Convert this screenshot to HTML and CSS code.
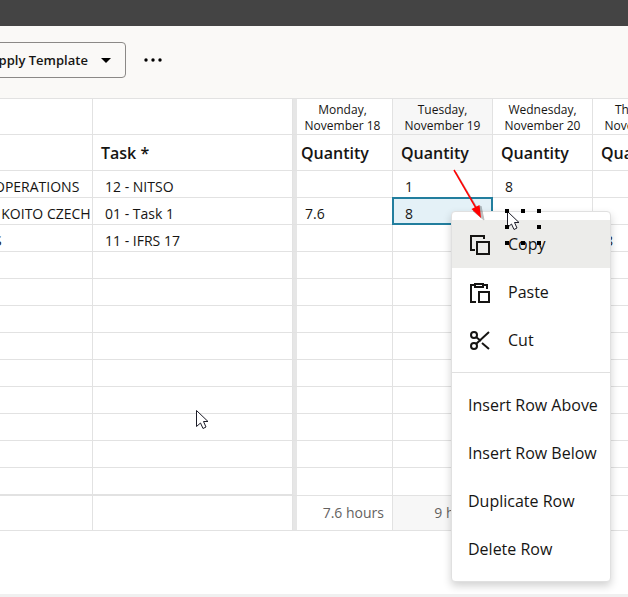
FILE: index.html
```
<!DOCTYPE html>
<html lang="en">
<head>
  <meta charset="UTF-8">
  <meta name="viewport" content="width=device-width, initial-scale=1.0">
  <title>Time Card</title>
  <link rel="stylesheet" href="styles.css">
</head>
<body>

<header class="topbar"></header>

<div class="toolbar">
  <button class="template-button" type="button">
    Apply Template
    <svg class="caret" viewBox="0 0 10 5" aria-hidden="true"><path d="M0 0h10L5 5z"/></svg>
  </button>
  <button class="more-button" type="button" aria-label="More actions">
    <svg viewBox="0 0 18 4" aria-hidden="true">
      <circle cx="2" cy="2" r="1.700"/><circle cx="9" cy="2" r="1.700"/><circle cx="16" cy="2" r="1.700"/>
    </svg>
  </button>
</div>

<main class="grid-area">
  <table class="timecard">
    <colgroup>
      <col class="col-project">
      <col class="col-task">
      <col class="col-day" span="4">
    </colgroup>
    <thead>
      <tr class="dates">
        <th></th>
        <th></th>
        <th class="split">Monday,<br>November 18</th>
        <th class="today">Tuesday,<br>November 19</th>
        <th>Wednesday,<br>November 20</th>
        <th>Thursday,<br>November 21</th>
      </tr>
      <tr class="names">
        <th></th>
        <th>Task *</th>
        <th class="split">Quantity</th>
        <th class="today">Quantity</th>
        <th>Quantity</th>
        <th>Quantity</th>
      </tr>
    </thead>
    <tbody>
      <tr><td class="project">OPERATIONS</td><td>12 - NITSO</td><td class="split"></td><td>1</td><td>8</td><td></td></tr>
      <tr><td class="project">&nbsp; KOITO CZECH</td><td>01 - Task 1</td><td class="split">7.6</td><td class="selected">8</td><td></td><td></td></tr>
      <tr><td class="project">S</td><td>11 - IFRS 17</td><td class="split"></td><td></td><td></td><td>8</td></tr>
      <tr><td></td><td></td><td class="split"></td><td></td><td></td><td></td></tr>
      <tr><td></td><td></td><td class="split"></td><td></td><td></td><td></td></tr>
      <tr><td></td><td></td><td class="split"></td><td></td><td></td><td></td></tr>
      <tr><td></td><td></td><td class="split"></td><td></td><td></td><td></td></tr>
      <tr><td></td><td></td><td class="split"></td><td></td><td></td><td></td></tr>
      <tr><td></td><td></td><td class="split"></td><td></td><td></td><td></td></tr>
      <tr><td></td><td></td><td class="split"></td><td></td><td></td><td></td></tr>
      <tr><td></td><td></td><td class="split"></td><td></td><td></td><td></td></tr>
      <tr class="last"><td></td><td></td><td class="split"></td><td></td><td></td><td></td></tr>
    </tbody>
    <tfoot>
      <tr>
        <td></td>
        <td></td>
        <td class="split">7.6 hours</td>
        <td class="today">9 hours</td>
        <td></td>
        <td></td>
      </tr>
    </tfoot>
  </table>
</main>

<footer class="bottom"></footer>

<div class="menu" role="menu">
  <button class="item active" type="button" role="menuitem">
    <svg class="icon" viewBox="0 0 24 24" aria-hidden="true">
      <path d="M7 18H3V4h13v3"/><path d="M9 10h12v12H9z"/>
    </svg>
    Copy
  </button>
  <button class="item" type="button" role="menuitem">
    <svg class="icon" viewBox="0 0 24 24" aria-hidden="true">
      <path d="M8 22H3V5h4M15 5h4v4"/><path d="M7 4h8v3H7z"/><path d="M11 12h10v10H11z"/>
    </svg>
    Paste
  </button>
  <button class="item" type="button" role="menuitem">
    <svg class="icon" viewBox="0 0 24 24" aria-hidden="true">
      <circle cx="6" cy="7" r="3"/><circle cx="6" cy="18" r="3"/>
      <path d="M8 16L21 4M8 9l5 4M14 15l7 6"/>
    </svg>
    Cut
  </button>
  <hr class="divider">
  <button class="item" type="button" role="menuitem">Insert Row Above</button>
  <button class="item" type="button" role="menuitem">Insert Row Below</button>
  <button class="item" type="button" role="menuitem">Duplicate Row</button>
  <button class="item" type="button" role="menuitem">Delete Row</button>
</div>

<!-- arrow, handles and pointers drawn over the grid -->
<svg class="marks" width="628" height="597" aria-hidden="true">
  <defs>
    <path id="pointer" d="M.5.5v16l4-3.500 2.500 5.500 3-1.500-2.500-5.500h4.500z"/>
  </defs>
  <g class="arrow-shadow">
    <path d="M456 172L479 211"/>
    <path d="M484 220l-11-9 8-5z"/>
  </g>
  <g class="arrow">
    <path d="M454 170L476 208"/>
    <path d="M481 218l-9.500-9 8-4z"/>
  </g>
  <use class="pointer" href="#pointer" x="507" y="211"/>
  <use class="pointer" href="#pointer" x="196" y="410"/>
  <path class="handles" d="M505 209h4v4h-4zM521 209h4v4h-4zM537 209h4v4h-4zM505 225h4v4h-4zM537 225h4v4h-4zM505 241h4v4h-4zM521 241h4v4h-4zM537 241h4v4h-4z"/>
</svg>

</body>
</html>
```
FILE: styles.css
```
* {
  box-sizing: border-box;
}
body {
  display: flex;
  flex-direction: column;
  min-height: 100vh;
  margin: 0;
  overflow: hidden;
  background: #fff;
  color: #161513;
  font-family: "Open Sans", "Noto Sans", sans-serif;
  font-size: 14px;
}
button {
  font: inherit;
  color: inherit;
  cursor: pointer;
}
.topbar {
  height: 26px;
  background: #444;
}

/* toolbar */
.toolbar {
  display: flex;
  align-items: center;
  gap: 10px;
  height: 72px;
  margin-left: -32px;
  padding-bottom: 4px;
  background: #faf9f7;
}
.template-button {
  display: flex;
  align-items: center;
  gap: 13px;
  height: 36px;
  padding: 0 14px 0 21px;
  border: 1px solid #8b8987;
  border-radius: 4px;
  background: transparent;
  font-size: 13px;
  font-weight: 600;
  white-space: nowrap;
}
.caret {
  width: 10px;
  height: 5px;
}
.more-button {
  display: flex;
  padding: 8px;
  border: 0;
  background: none;
}
.more-button svg {
  width: 18px;
  height: 4px;
}

/* grid */
.grid-area {
  flex: 1;
  overflow: hidden;
}
.timecard {
  width: 699px;
  margin-left: -6px;
  border-top: 1px solid #e2e2e2;
  border-collapse: separate;
  border-spacing: 0;
  table-layout: fixed;
}
.col-project {
  width: 99px;
}
.col-task {
  width: 200px;
}
.col-day {
  width: 100px;
}
th, td {
  height: 27px;
  padding: 5px 0 0 12px;
  border: solid #e2e2e2;
  border-width: 0 1px 1px 0;
  line-height: 20px;
  text-align: left;
  white-space: nowrap;
}
.dates th {
  height: 36px;
  padding: 2px 0 0;
  font-size: 12px;
  font-weight: 400;
  line-height: 16px;
  text-align: center;
}
.names th {
  height: 36px;
  padding: 0 8px;
  font-size: 16px;
  font-weight: 600;
}
td.project {
  padding-left: 0;
}
.split {
  box-shadow: inset 4px 0 #e6e6e6;
}
.today {
  background: #f7f7f7;
}
.selected {
  position: relative;
  background: #e4f1f7;
}
.selected::after {
  content: "";
  position: absolute;
  inset: -1px;
  border: 2px solid #227e9e;
}
.last td {
  height: 28px;
}
.last td:nth-child(-n+2) {
  border-bottom-width: 2px;
}
tfoot td {
  height: 35px;
  padding: 0 8px;
  color: #65625f;
  text-align: right;
}
.bottom {
  height: 3px;
  background: #f0f0f0;
}

/* context menu */
.menu {
  position: absolute;
  top: 211px;
  left: 451px;
  width: 160px;
  padding: 8px 0;
  border: 1px solid #e0e0e0;
  border-radius: 4px;
  background: #fff;
  box-shadow: 0 4px 8px rgba(0, 0, 0, 0.18);
}
.item {
  display: flex;
  align-items: center;
  gap: 16px;
  width: 100%;
  height: 48px;
  padding: 0 16px;
  border: 0;
  background: none;
  font-size: 16px;
  white-space: nowrap;
}
.active {
  background: #ececea;
}
.icon {
  width: 24px;
  height: 24px;
  fill: none;
  stroke: #161513;
  stroke-width: 2;
}
.divider {
  margin: 8px 0;
  border: 0;
  border-top: 1px solid #e0e0e0;
}

/* marks */
.marks {
  position: absolute;
  top: 0;
  left: 0;
  pointer-events: none;
}
.arrow {
  fill: #f00;
  stroke: #f00;
  stroke-width: 1.5;
}
.arrow path:last-child {
  stroke-width: 0;
}
.arrow-shadow {
  fill: #000;
  stroke: #000;
  stroke-width: 1;
  opacity: 0.25;
}
.pointer {
  fill: #fff;
  stroke: #1c1c28;
}
```
